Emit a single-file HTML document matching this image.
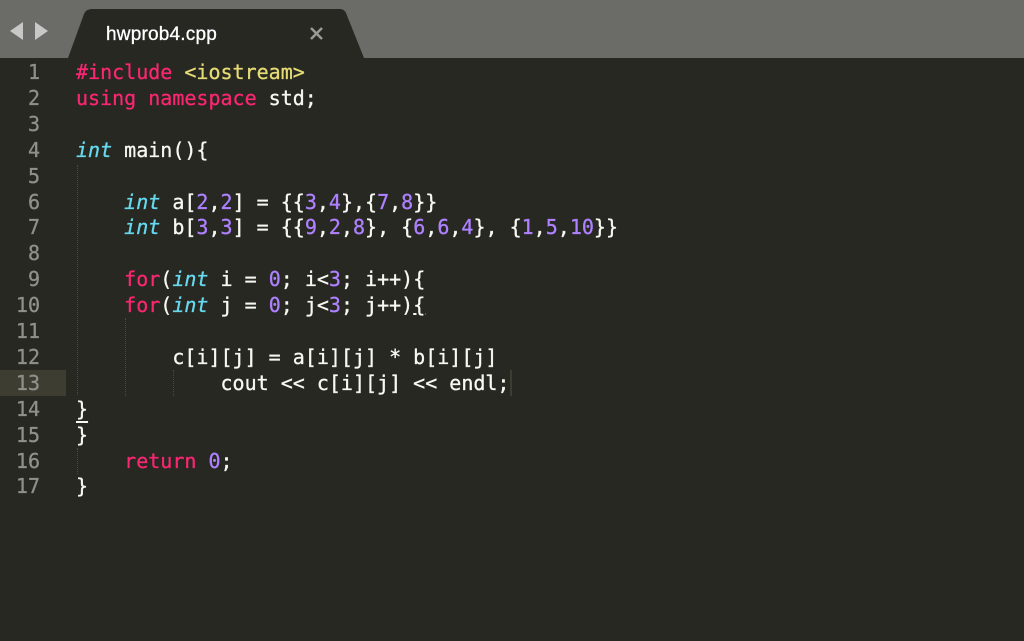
<!DOCTYPE html>
<html><head><meta charset="utf-8"><style>
html,body{margin:0;padding:0;width:1024px;height:641px;overflow:hidden;background:#272822;}
.bar{position:absolute;left:0;top:0;width:1024px;height:58px;background:#6b6b68;}
.tab{position:absolute;left:0;top:0;}
.title{position:absolute;left:106px;top:24px;font:19px "Liberation Sans",sans-serif;color:#fff;letter-spacing:0.2px;-webkit-text-stroke:0.3px #fff;}
.code{position:absolute;left:0;top:60px;font:20px/25.9px "DejaVu Sans Mono","Liberation Mono",monospace;color:#f8f8f2;white-space:pre;-webkit-text-stroke:0.3px currentColor;}
.ln{position:absolute;left:0;width:40px;text-align:right;color:#8f908a;}
.tx{position:absolute;left:76px;}
.k{color:#f92672}.t{color:#66d9ef;font-style:italic}.n{color:#ae81ff}.s{color:#e6db74}
.hl{position:absolute;left:0;top:370px;width:66px;height:26px;background:#3e3d32;}
.g{position:absolute;width:0;border-left:1px dotted #4a4a44;}
</style></head><body>
<div class="bar"></div>
<svg class="tab" width="1024" height="60">
<path d="M68 58 L84 14 Q86 9 92 9 L340 9 Q344 9 346 13 L364 58 Z" fill="#272822"/>
<path d="M23 22 L10 31 L23 40 Z" fill="#c8c8c6"/>
<path d="M35 22 L48 31 L35 40 Z" fill="#c8c8c6"/>
<path d="M311 28 L322 39 M322 28 L311 39" stroke="#9a9a96" stroke-width="2.5"/>
</svg>
<div class="title">hwprob4.cpp</div>
<div class="hl"></div>
<div class="g" style="left:77px;top:165px;height:230px"></div>
<div class="g" style="left:125px;top:318px;height:78px"></div>
<div class="g" style="left:173px;top:370px;height:26px"></div>
<div class="g" style="left:77px;top:448px;height:26px"></div>
<div style="position:absolute;left:510px;top:370px;width:2px;height:26px;background:#3e3d32"></div>
<div class="code">
<div class="ln" style="top:0">1</div><div class="tx" style="top:0"><span class="k">#include</span> <span class="s">&lt;iostream&gt;</span></div>
<div class="ln" style="top:25.9px">2</div><div class="tx" style="top:25.9px"><span class="k">using namespace</span> std;</div>
<div class="ln" style="top:51.8px">3</div>
<div class="ln" style="top:77.7px">4</div><div class="tx" style="top:77.7px"><span class="t">int</span> main(){</div>
<div class="ln" style="top:103.6px">5</div>
<div class="ln" style="top:129.5px">6</div><div class="tx" style="top:129.5px">    <span class="t">int</span> a[<span class="n">2</span>,<span class="n">2</span>] = {{<span class="n">3</span>,<span class="n">4</span>},{<span class="n">7</span>,<span class="n">8</span>}}</div>
<div class="ln" style="top:155.4px">7</div><div class="tx" style="top:155.4px">    <span class="t">int</span> b[<span class="n">3</span>,<span class="n">3</span>] = {{<span class="n">9</span>,<span class="n">2</span>,<span class="n">8</span>}, {<span class="n">6</span>,<span class="n">6</span>,<span class="n">4</span>}, {<span class="n">1</span>,<span class="n">5</span>,<span class="n">10</span>}}</div>
<div class="ln" style="top:181.3px">8</div>
<div class="ln" style="top:207.2px">9</div><div class="tx" style="top:207.2px">    <span class="k">for</span>(<span class="t">int</span> i = <span class="n">0</span>; i&lt;<span class="n">3</span>; i++){</div>
<div class="ln" style="top:233.1px">10</div><div class="tx" style="top:233.1px">    <span class="k">for</span>(<span class="t">int</span> j = <span class="n">0</span>; j&lt;<span class="n">3</span>; j++)<u>{</u></div>
<div class="ln" style="top:259px">11</div>
<div class="ln" style="top:284.9px">12</div><div class="tx" style="top:284.9px">        c[i][j] = a[i][j] * b[i][j]</div>
<div class="ln" style="top:310.8px">13</div><div class="tx" style="top:310.8px">            cout &lt;&lt; c[i][j] &lt;&lt; endl;</div>
<div class="ln" style="top:336.7px">14</div><div class="tx" style="top:336.7px">}</div>
<div class="ln" style="top:362.6px">15</div><div class="tx" style="top:362.6px"><span style="text-decoration:overline">}</span></div>
<div class="ln" style="top:388.5px">16</div><div class="tx" style="top:388.5px">    <span class="k">return</span> <span class="n">0</span>;</div>
<div class="ln" style="top:414.4px">17</div><div class="tx" style="top:414.4px">}</div>
</div>
</body></html>
